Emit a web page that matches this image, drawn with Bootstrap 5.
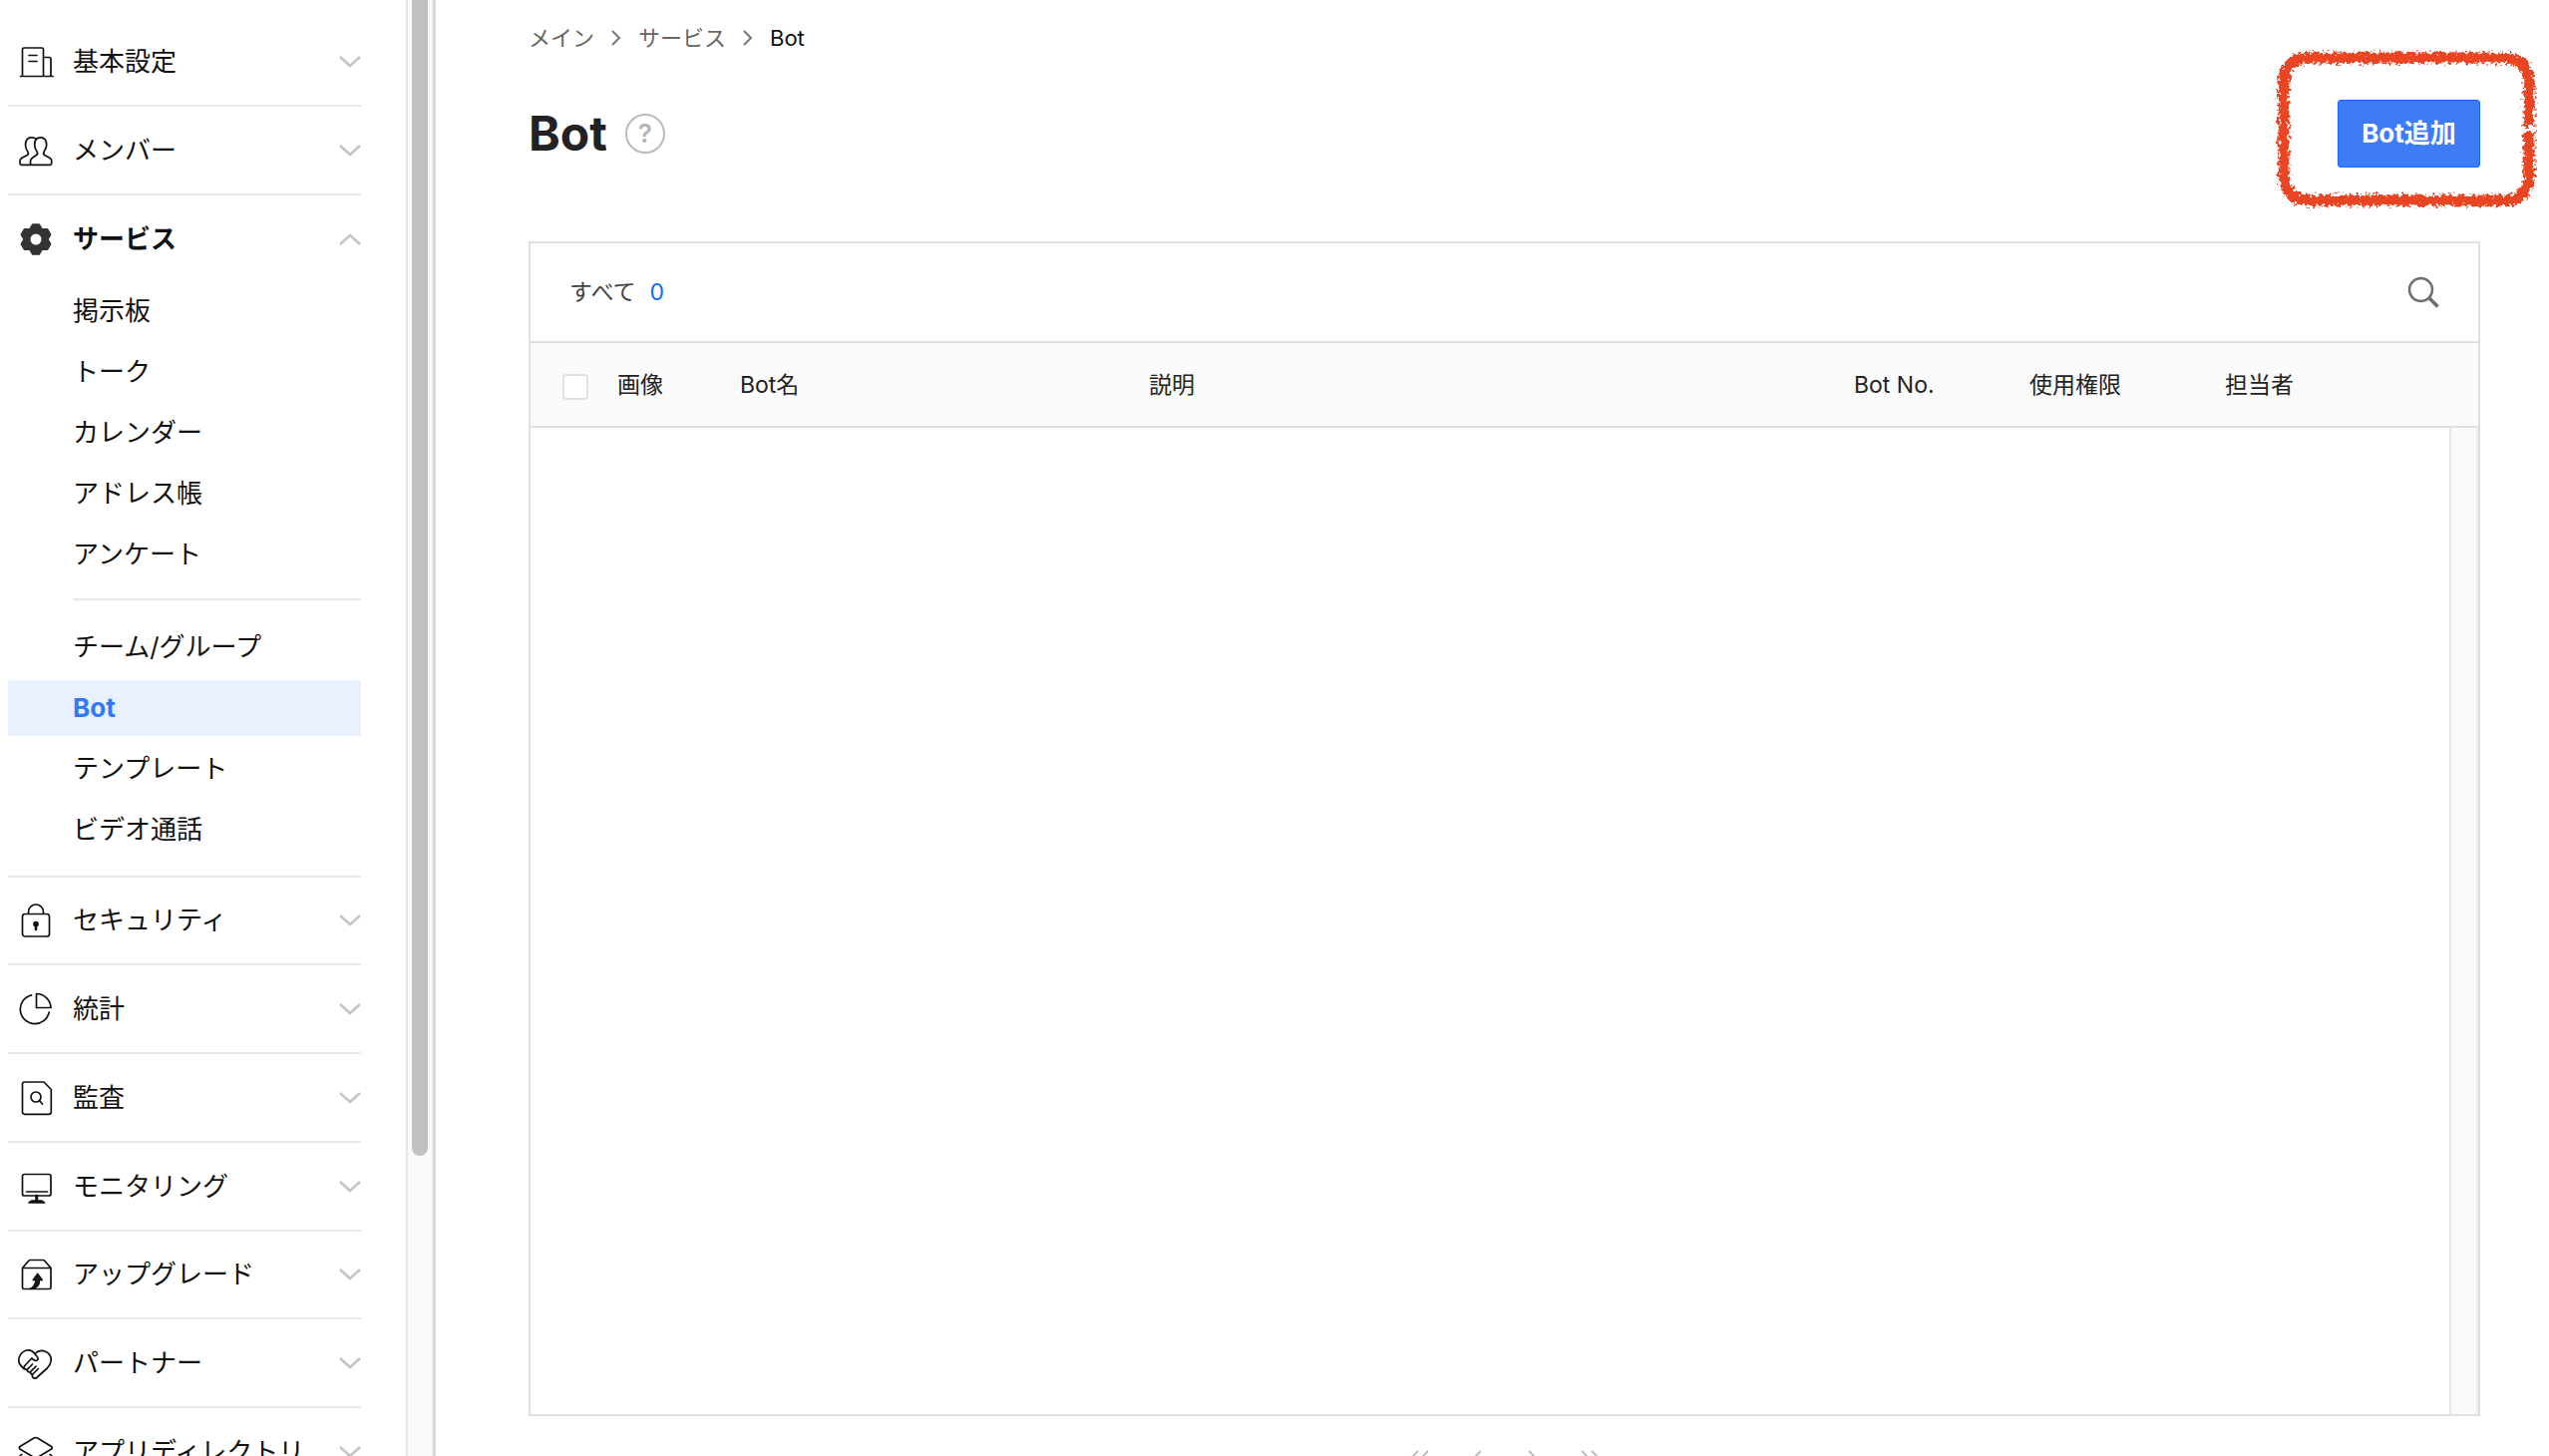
<!DOCTYPE html>
<html lang="ja">
<head>
<meta charset="utf-8">
<meta name="viewport" content="width=device-width, initial-scale=1">
<title>Bot</title>
<link href="https://cdn.jsdelivr.net/npm/bootstrap@5.3.0/dist/css/bootstrap.min.css" rel="stylesheet">
<style>
  body { font-family: Inter, "Noto Sans CJK JP", sans-serif; font-size: 23px; line-height: 34px; color: #111; background: #fff; }
  a { text-decoration: none; color: inherit; }

  /* Sidebar */
  .side { width: 437px; border-right: 3px solid #d9d9d9; }
  .side-nav { padding: 18px 45px 0 8px; font-size: 26px; line-height: 40px; }
  .side-nav > li { border-bottom: 2px solid #e8e8e8; }
  .sect { height: 87px; padding: 0 0 0 10px; gap: 19px; border: 0; background: none; color: #111; }
  .side-nav > li:nth-child(4) .sect, .side-nav > li:nth-child(8) .sect { height: 86px; }
  .sect.open { height: 88px; font-weight: 700; }
  .sect svg { fill: none; stroke: #111; stroke-width: 1.7; stroke-linejoin: round; stroke-linecap: round; }
  .sect svg.chev { stroke: #c4c4c4; stroke-width: 2.5; stroke-linejoin: miter; stroke-linecap: butt; }
  .subs { gap: 5px; padding-bottom: 16px; }
  .subs a { display: block; height: 56px; line-height: 56px; padding-left: 65px; }
  .subs a.active { background: #e9f1ff; color: #3478f6; font-weight: 700; }
  .subs + .subs { padding-bottom: 18px; }
  .subs + .subs::before { content: ""; margin: 0 0 14px 65px; border-top: 2px solid #e8e8e8; }
  .side-scroll { width: 27px; background: #fafafa; border: solid #e8e8e8; border-width: 0 1px 0 2px; }
  .side-thumb { width: 16px; height: 1159px; background: #c1c1c1; border-radius: 0 0 8px 8px; }

  /* Main */
  .main-area { padding: 21px 69px 0 93px; }
  .breadcrumb { gap: 17px; color: #666; font-size: 22px; }
  .breadcrumb svg { fill: none; stroke: #777; stroke-width: 2; }
  .breadcrumb .here { color: #111; }
  .head-row { margin: 45px 0 74px; gap: 18px; }
  .page-title { font-size: 48px; line-height: 68px; font-weight: 700; color: #222; }
  .help-btn { width: 40px; height: 40px; border: 2px solid #bbb; color: #b5b5b5; font-size: 26px; font-weight: 600; background: none; }
  .add-btn { width: 143px; height: 68px; padding: 0 0 2px; border: 1px solid #1a6bf5; border-radius: 3px; background: #3d7cf6; color: #fff; font-size: 26px; font-weight: 700; }
  .pen-ring { position: absolute; left: -65px; top: -55px; width: 268px; height: 168px; pointer-events: none; }
  .panel { border: 2px solid #e0e0e0; }
  .tool-row { height: 98px; padding: 0 39px; color: #444; gap: 14px; }
  .tool-row .num { color: #0d6efd; }
  .tool-row button { border: 0; background: none; }
  .list-table { table-layout: fixed; border-color: #e0e0e0; }
  .list-table th { height: 85px; padding: 0; font-weight: 400; color: #222; background: #fafafa; border: solid #e0e0e0; border-width: 2px 0; vertical-align: middle; }
  .c-check { width: 87px; } .c-img { width: 123px; } .c-name { width: 410px; } .c-no { width: 176px; } .c-perm { width: 196px; } .c-owner { width: 254px; }
  .list-table .form-check-input { width: 26px; height: 26px; margin: 4px 0 0 32px; border: 2px solid #e0e0e0; border-radius: 4px; display: block; }
  .body-scroll { width: 29px; background: #fafafa; border-left: 2px solid #e6e6e6; border-right: 2px solid #eee; }
  .pager { height: 40px; padding-top: 34px; }
  .pager button { width: 58px; height: 20px; line-height: 0; border: 0; background: none; }
  .pager svg { fill: none; stroke: #bbb; stroke-width: 2; }
</style>
</head>
<body>
<svg class="d-none" aria-hidden="true">
  <symbol id="down" viewBox="0 0 22 14"><path d="M1 2l10 9L21 2"/></symbol>
  <symbol id="up" viewBox="0 0 22 14"><path d="M1 12L11 3l10 9"/></symbol>
</svg>
<div class="d-flex vh-100 overflow-hidden">
  <aside class="side d-flex flex-shrink-0">
    <ul class="side-nav list-unstyled flex-grow-1 mb-0">
      <li><button class="sect d-flex align-items-center w-100 text-start" type="button">
        <svg width="36" height="36"><path d="M4.500 32.500V5.500q0-1.500 1.500-1.500h18q1.500 0 1.500 1.500v27M25.500 13.500h6q1.500 0 1.500 1.500v17.500M2.500 32.500H35M11 11.500h8M11 17.500h8"/></svg>
        <span class="flex-grow-1">基本設定</span><svg class="chev" width="22" height="14"><use href="#down"/></svg></button></li>
      <li><button class="sect d-flex align-items-center w-100 text-start" type="button">
        <svg width="36" height="36"><path d="M12.500 31q0 1.300 1.300 1.300h18.400q1.500 0 1.500-1.500v-2.500q0-2-2-3l-4.700-2.500q-2-1.200-1-3.500c1.500-2 2.700-4 2.700-7 0-4.500-2-7.500-6-7.500s-6 3-6 7.500c0 3 1 5 2.500 7q1.200 2.300-1 3.500l-3.700 2.500q-2 1.500-2 3.500zM18.500 6.500c-1.500-1.300-3-1.700-5-1.700-4 0-6 3-6 7.500 0 3 1 5 2.500 7q1 2.300-1 3.500l-5 2.500q-2 1.300-2 3.500v2q0 1.500 1.500 1.500h10"/></svg>
        <span class="flex-grow-1">メンバー</span><svg class="chev" width="22" height="14"><use href="#down"/></svg></button></li>
      <li><button class="sect open d-flex align-items-center w-100 text-start" type="button" aria-expanded="true">
        <svg width="36" height="36" viewBox="-18 -18 36 36"><circle r="9" style="stroke-width:7;stroke:#333"/><g style="fill:#333;stroke:#333"><path d="M-3.200-15H3.200L6-10H-6z"/><path transform="rotate(60)" d="M-3.200-15H3.200L6-10H-6z"/><path transform="rotate(120)" d="M-3.200-15H3.200L6-10H-6z"/><path transform="rotate(180)" d="M-3.200-15H3.200L6-10H-6z"/><path transform="rotate(240)" d="M-3.200-15H3.200L6-10H-6z"/><path transform="rotate(300)" d="M-3.200-15H3.200L6-10H-6z"/></g></svg>
        <span class="flex-grow-1">サービス</span><svg class="chev" width="22" height="14"><use href="#up"/></svg></button>
        <nav class="subs d-flex flex-column">
          <a href="#">掲示板</a><a href="#">トーク</a><a href="#">カレンダー</a><a href="#">アドレス帳</a><a href="#">アンケート</a>
        </nav>
        <nav class="subs d-flex flex-column">
          <a href="#">チーム/グループ</a><a href="#" class="active" aria-current="page">Bot</a><a href="#">テンプレート</a><a href="#">ビデオ通話</a>
        </nav></li>
      <li><button class="sect d-flex align-items-center w-100 text-start" type="button">
        <svg width="36" height="36"><rect x="4.500" y="11.500" width="27" height="22.500" rx="2.500"/><path d="M10.500 11.500v-2a7.500 7.500 0 0 1 15 0v2"/><circle cx="18" cy="21.500" r="2" fill="#111"/><path d="M18 22v5" style="stroke-width:2.500"/></svg>
        <span class="flex-grow-1">セキュリティ</span><svg class="chev" width="22" height="14"><use href="#down"/></svg></button></li>
      <li><button class="sect d-flex align-items-center w-100 text-start" type="button">
        <svg width="36" height="36"><path d="M13.500 3.800A14.600 14.600 0 1 0 31.200 21M18.500 2.500v14H33A14.500 14.500 0 0 0 18.500 2.500z"/></svg>
        <span class="flex-grow-1">統計</span><svg class="chev" width="22" height="14"><use href="#down"/></svg></button></li>
      <li><button class="sect d-flex align-items-center w-100 text-start" type="button">
        <svg width="36" height="36"><path d="M6.500 2H26l7.300 7.500v22.500q0 2.300-2.300 2.300H6.800q-2.300 0-2.300-2.300V4q0-2 2-2z"/><circle cx="18" cy="17" r="5"/><path d="M21.500 20.500l3 3.500"/></svg>
        <span class="flex-grow-1">監査</span><svg class="chev" width="22" height="14"><use href="#down"/></svg></button></li>
      <li><button class="sect d-flex align-items-center w-100 text-start" type="button">
        <svg width="36" height="36"><rect x="4.500" y="5.500" width="28.500" height="21.500" rx="2"/><path d="M8.500 23h21"/><path d="M18.700 27v5" style="stroke-width:3"/><path d="M11 34h15.500l-3-2h-9.500z" fill="#111"/></svg>
        <span class="flex-grow-1">モニタリング</span><svg class="chev" width="22" height="14"><use href="#down"/></svg></button></li>
      <li><button class="sect d-flex align-items-center w-100 text-start" type="button">
        <svg width="36" height="36"><path d="M4.500 11.500l6-7q.8-1 2-1h12.500q1.200 0 2 1l6 7v19.500q0 1.500-1.500 1.500H6q-1.500 0-1.500-1.500zM4.500 11.500H33"/><path d="M19.700 17.500l4.500 6h-2.700c0 5-3 8.500-9 9 3.500-2 5.500-4.500 5.500-9h-2.700z" fill="#222"/></svg>
        <span class="flex-grow-1">アップグレード</span><svg class="chev" width="22" height="14"><use href="#down"/></svg></button></li>
      <li><button class="sect d-flex align-items-center w-100 text-start" type="button">
        <svg width="36" height="36"><path d="M16.800 8.500C11-.5-2.500 8.500 1.600 18.500c1 2 2.700 3.500 4.400 5M16.800 8.500c7-6.500 17.500-1.500 16.300 7.500-.4 3-2 5-3.800 7L18.700 32.500q-1.700 1.300-3.400 0c-1.300-1-1.300-2.500 0-4l5-5M16.800 8.500l2.500 3q1.500 2 0 3.500-2 1-3.500-.5l-2-1.500-7 7.500c-2 2.500 1 5 3.200 3l4.500-4.500M10 23.500c-1.800 2.500 1 4.500 3 2.700l5-5M13 26.200c-1 2 .5 3.500 2.300 2.300"/></svg>
        <span class="flex-grow-1">パートナー</span><svg class="chev" width="22" height="14"><use href="#down"/></svg></button></li>
      <li><button class="sect d-flex align-items-center w-100 text-start" type="button">
        <svg width="36" height="36"><path d="M16 4q1.800-1 3.600 0l14 8.500q1.400 1.200 0 2.400l-14 8.500q-1.800 1-3.600 0l-14-8.500q-1.400-1.200 0-2.400zM4 20.500q-3 1-1 2.500l14 8q1 .6 2 0l14-8q2-1.500-1-2.500"/></svg>
        <span class="flex-grow-1">アプリディレクトリ</span><svg class="chev" width="22" height="14"><use href="#down"/></svg></button></li>
    </ul>
    <div class="side-scroll d-flex justify-content-center" aria-hidden="true"><div class="side-thumb"></div></div>
  </aside>

  <main class="main-area d-flex flex-column flex-grow-1">
    <nav aria-label="breadcrumb">
      <ol class="breadcrumb align-items-center mb-0">
        <li><a href="#">メイン</a></li>
        <li class="d-flex" aria-hidden="true"><svg width="10" height="16"><path d="M1 1l7 7-7 7"/></svg></li>
        <li><a href="#">サービス</a></li>
        <li class="d-flex" aria-hidden="true"><svg width="10" height="16"><path d="M1 1l7 7-7 7"/></svg></li>
        <li class="here" aria-current="page">Bot</li>
      </ol>
    </nav>
    <div class="head-row d-flex align-items-center">
      <h1 class="page-title mb-0">Bot</h1>
      <button class="help-btn rounded-circle d-flex align-items-center justify-content-center p-0" type="button" aria-label="ヘルプ">?</button>
      <div class="position-relative ms-auto">
        <button class="add-btn btn d-block" type="button">Bot追加</button>
        <svg class="pen-ring" viewBox="0 0 268 168" aria-hidden="true">
          <filter id="rough" x="-5%" y="-5%" width="110%" height="110%">
            <feTurbulence type="fractalNoise" baseFrequency="0.3" numOctaves="3" seed="4"/>
            <feDisplacementMap in="SourceGraphic" scale="11" xChannelSelector="R" yChannelSelector="G"/>
          </filter>
          <path filter="url(#rough)" d="M257 82V39Q257 13 231 13H37Q11 13 11 39V129Q11 156 37 156H231Q257 156 257 129V87" fill="none" stroke="#ea4424" stroke-width="11"/>
        </svg>
      </div>
    </div>
    <section class="panel d-flex flex-column flex-grow-1">
      <div class="tool-row d-flex align-items-center">
        <span>すべて</span><span class="num">0</span>
        <button class="ms-auto p-0 d-flex" type="button" aria-label="検索"><svg width="32" height="32" fill="none" stroke="#707070"><circle cx="13.500" cy="13.500" r="11.500" stroke-width="2.500"/><path d="M22 22l8.500 8.500" stroke-width="3.500"/></svg></button>
      </div>
      <table class="list-table table mb-0">
        <thead><tr>
          <th class="c-check"><input class="form-check-input" type="checkbox" aria-label="すべて選択"></th>
          <th class="c-img">画像</th><th class="c-name">Bot名</th><th>説明</th><th class="c-no">Bot No.</th><th class="c-perm">使用権限</th><th class="c-owner">担当者</th>
        </tr></thead>
      </table>
      <div class="d-flex flex-grow-1 justify-content-end"><div class="body-scroll" aria-hidden="true"></div></div>
    </section>
    <nav class="pager d-flex justify-content-center flex-shrink-0" aria-label="ページ">
      <button class="p-0" type="button" aria-label="最初"><svg width="20" height="20"><path d="M10 1L1 10l9 9M20 1l-9 9 9 9"/></svg></button>
      <button class="p-0" type="button" aria-label="前"><svg width="10" height="20"><path d="M10 1L1 10l9 9"/></svg></button>
      <button class="p-0" type="button" aria-label="次"><svg width="10" height="20"><path d="M0 1l9 9-9 9"/></svg></button>
      <button class="p-0" type="button" aria-label="最後"><svg width="20" height="20"><path d="M0 1l9 9-9 9M10 1l9 9-9 9"/></svg></button>
    </nav>
  </main>
</div>
<script src="https://cdn.jsdelivr.net/npm/bootstrap@5.3.0/dist/js/bootstrap.bundle.min.js"></script>
</body>
</html>
